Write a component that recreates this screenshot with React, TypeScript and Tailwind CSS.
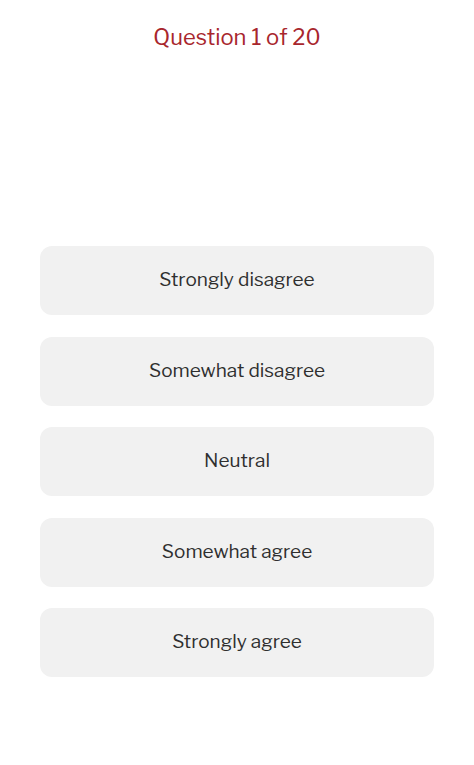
const options = ['Strongly disagree', 'Somewhat disagree', 'Neutral', 'Somewhat agree', 'Strongly agree'];

export default function App() {
  return (
    <div
      className="min-h-[765px] w-full bg-white flex flex-col items-center"
      style={{ fontFamily: '"Libre Franklin", "Liberation Sans", Arial, sans-serif' }}
    >
      <h1 className="mt-[23px] text-[22px] leading-7 text-[#a8262d]">Question 1 of 20</h1>

      {/* question text rendered near-invisible in the original */}
      <div className="h-[195px] w-full" />

      <div className="w-full px-10 flex flex-col gap-[21.5px]">
        {options.map((opt) => (
          <button
            key={opt}
            className="h-[69px] w-full rounded-xl bg-[#f1f1f1] text-[19px] text-[#2f2f2f] flex items-center justify-center"
          >
            {opt}
          </button>
        ))}
      </div>
    </div>
  );
}
